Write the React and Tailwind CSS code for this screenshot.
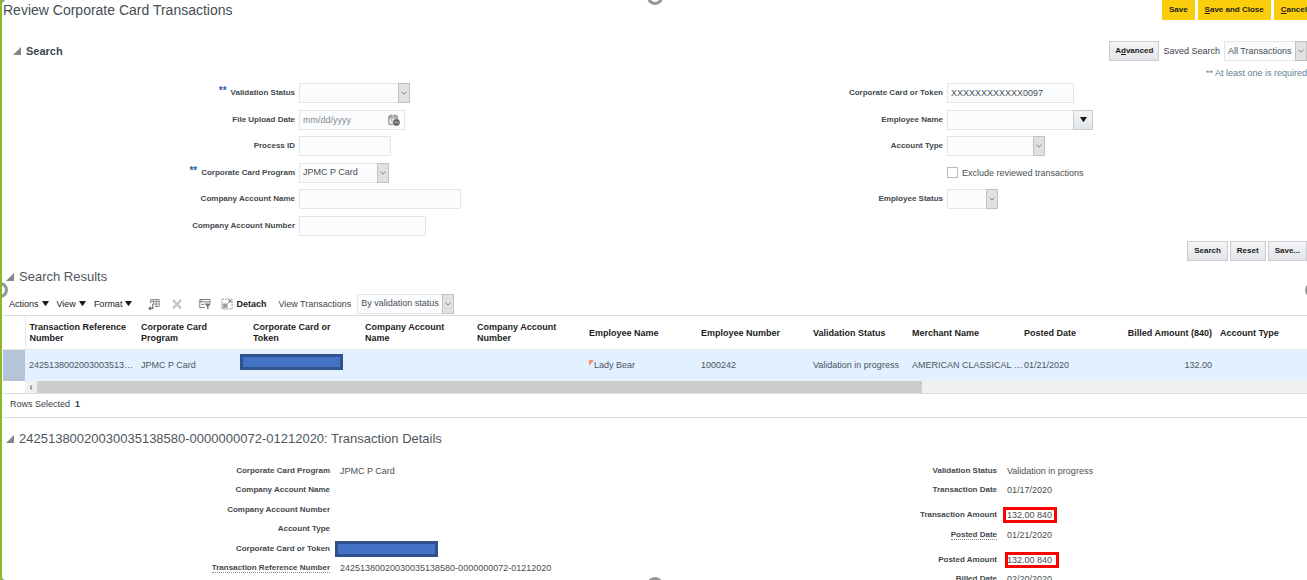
import React from "react";

const fieldBox = "h-5 border border-[#e3e7eb] bg-[#fbfcfe] text-[9px] leading-none text-[#4a4f54]";
const greyButton =
  "h-5 shrink-0 border border-[#c9cdd1] bg-linear-to-b from-[#f3f4f6] to-[#e2e5e8] text-[8px] leading-none font-bold text-[#1c1c1c]";

function Disclosure() {
  return (
    <svg className="size-2 shrink-0" viewBox="0 0 8 8" aria-hidden="true">
      <path d="M8 0V8H0Z" fill="#858585" />
    </svg>
  );
}

function DownTriangle() {
  return (
    <svg className="h-[5px] w-[7px] shrink-0" viewBox="0 0 7 5" aria-hidden="true">
      <path d="M0 0H7L3.9 4.8H3.1Z" fill="#1a1a1a" />
    </svg>
  );
}

function Select({ id, width, options }) {
  return (
    <div className={`grid shrink-0 ${width}`}>
      <select
        id={id}
        className={`col-start-1 row-start-1 w-full min-w-0 appearance-none pr-3 pl-[3px] ${fieldBox}`}
      >
        {options.map((o) => (
          <option key={o}>{o}</option>
        ))}
      </select>
      <span className="pointer-events-none col-start-1 row-start-1 flex h-5 w-3 items-center justify-center justify-self-end border border-[#c2c2c2] bg-[#e1e1e1]">
        <svg className="h-[4px] w-[6px]" viewBox="0 0 6 4" aria-hidden="true">
          <path d="M0.6 0.7L3 3.1L5.4 0.7" fill="none" stroke="#707070" strokeWidth="0.9" />
        </svg>
      </span>
    </div>
  );
}

function FormRow({ id, label, starred, children }) {
  return (
    <div className="flex h-5 items-center gap-1">
      <div className="flex w-[292px] shrink-0 items-center justify-end gap-1 text-[8px] font-bold text-[#43484d]">
        {starred && <span className="pb-1 text-[10px] leading-none text-[#2f62a8]">**</span>}
        {label && <label htmlFor={id}>{label}</label>}
      </div>
      {children}
    </div>
  );
}

function TextField({ id, width, ...rest }) {
  return <input id={id} type="text" className={`shrink-0 px-[3px] ${fieldBox} ${width}`} {...rest} />;
}

function CalendarIcon() {
  return (
    <svg className="size-3" viewBox="0 0 12 12" aria-hidden="true">
      <path d="M5 10.3H0.9V2H9.3V4.6M0.9 4H9.3M3 0.4V2.8M7.2 0.4V2.8" fill="none" stroke="#777" strokeWidth="1" />
      <path d="M2.8 5.8H4V8.4" fill="none" stroke="#888" strokeWidth="0.8" />
      <circle cx="8.4" cy="8.4" r="3.4" fill="#666" />
      <path d="M6.6 7.6L8.4 8.6L10.4 8.2" fill="none" stroke="#ddd" strokeWidth="0.8" />
    </svg>
  );
}

function SearchForm() {
  return (
    <div className="mt-1 grid grid-cols-2 pr-2">
      <div className="flex h-[153px] flex-col justify-between">
        <FormRow id="vstatus" label="Validation Status" starred>
          <Select id="vstatus" width="w-[111px]" options={[""]} />
        </FormRow>
        <FormRow id="upload" label="File Upload Date">
          <div className={`flex w-[106px] items-center pr-1 ${fieldBox}`}>
            <input
              id="upload"
              type="text"
              placeholder="mm/dd/yyyy"
              className="w-full min-w-0 bg-transparent px-[3px] placeholder:text-[#85898d]"
            />
            <button type="button" aria-label="Pick a date">
              <CalendarIcon />
            </button>
          </div>
        </FormRow>
        <FormRow id="process" label="Process ID">
          <TextField id="process" width="w-[92px]" />
        </FormRow>
        <FormRow id="program" label="Corporate Card Program" starred>
          <Select id="program" width="w-[90px]" options={["JPMC P Card"]} />
        </FormRow>
        <FormRow id="accname" label="Company Account Name">
          <TextField id="accname" width="w-[162px]" />
        </FormRow>
        <FormRow id="accnum" label="Company Account Number">
          <TextField id="accnum" width="w-[127px]" />
        </FormRow>
      </div>
      <div className="flex h-[153px] flex-col justify-between">
        <FormRow id="token" label="Corporate Card or Token">
          <TextField id="token" width="w-[127px]" defaultValue="XXXXXXXXXXXX0097" />
        </FormRow>
        <FormRow id="empname" label="Employee Name">
          <div className="flex">
            <TextField id="empname" width="w-[127px]" />
            <button
              type="button"
              aria-label="Choose an employee"
              className={`-ml-px flex w-5 items-center justify-center ${greyButton}`}
            >
              <DownTriangle />
            </button>
          </div>
        </FormRow>
        <FormRow id="acctype" label="Account Type">
          <Select id="acctype" width="w-[98px]" options={[""]} />
        </FormRow>
        <FormRow>
          <label className="flex items-center gap-1 text-[9px] text-[#4a4f54]">
            <input type="checkbox" className="size-[11px] appearance-none border border-[#b5b9bd] bg-white" />
            Exclude reviewed transactions
          </label>
        </FormRow>
        <FormRow id="empstatus" label="Employee Status">
          <Select id="empstatus" width="w-[51px]" options={[""]} />
        </FormRow>
        <div className="h-5" />
      </div>
    </div>
  );
}

function ExportIcon() {
  return (
    <svg className="size-3" viewBox="0 0 12 12" aria-hidden="true">
      <path d="M2.5 5V1.5H11.2V8.5H6.8M2.5 3.6H11.2M5.4 1.5V6M8.3 1.5V8.5M5.2 6H11.2" fill="none" stroke="#858585" strokeWidth="0.9" />
      <path d="M4.8 6V10.4H1.2M2.8 8.6L1 10.4L2.8 12" fill="none" stroke="#666" strokeWidth="1.1" />
    </svg>
  );
}

function DeleteIcon() {
  return (
    <svg className="size-3" viewBox="0 0 12 12" aria-hidden="true">
      <path d="M2 2L10 10.4M10 2L2 10.4" stroke="#c6c6c6" strokeWidth="2.4" />
    </svg>
  );
}

function FilterIcon() {
  return (
    <svg className="size-3" viewBox="0 0 12 12" aria-hidden="true">
      <path d="M11 4.6V1.5H0.8V9.6H5.8M0.8 3.9H11M2.4 6.4H5M2.4 1.5V3.9" fill="none" stroke="#7d7d7d" strokeWidth="1" />
      <path d="M5.4 5.6H12L9.5 8.4V11.6L8 10.6V8.4Z" fill="#777" />
    </svg>
  );
}

function DetachIcon() {
  return (
    <svg className="size-3" viewBox="0 0 12 12" aria-hidden="true">
      <rect x="0.9" y="1.2" width="10.2" height="9.8" fill="none" stroke="#8a8a8a" strokeWidth="0.9" strokeDasharray="2 1" />
      <rect x="1.4" y="5.2" width="5.4" height="5.4" fill="#bdbdbd" />
      <path d="M2.2 7H6M2.2 8.8H6" stroke="#777" strokeWidth="0.8" />
      <path d="M6.8 5.4L9.6 2.8M7.6 2.6H9.8V4.8" fill="none" stroke="#777" strokeWidth="1" />
    </svg>
  );
}

function MenuButton({ children }) {
  return (
    <button type="button" className="flex items-center gap-[3px]">
      {children}
      <DownTriangle />
    </button>
  );
}

function Redacted({ className }) {
  return <span className={`absolute h-4 w-[103px] border-3 border-[#2f528f] bg-[#4472c4] ${className}`} />;
}

const columns = [
  ["Transaction Reference Number", "w-[112px]"],
  ["Corporate Card Program", "w-[112px]"],
  ["Corporate Card or Token", "w-[112px]"],
  ["Company Account Name", "w-[112px]"],
  ["Company Account Number", "w-[112px]"],
  ["Employee Name", "w-[112px]"],
  ["Employee Number", "w-[112px]"],
  ["Validation Status", "w-[99px]"],
  ["Merchant Name", "w-[112px]"],
  ["Posted Date", "w-[84px]"],
  ["Billed Amount (840)", "w-[112px]"],
  ["Account Type", ""],
];

function ResultsTable() {
  return (
    <div className="border-y border-[#dcdcdc]">
      <table className="w-full table-fixed border-collapse text-left text-[9px] leading-[11px]">
        <thead>
          <tr className="h-[33px] border-b border-[#e6e9ec] text-[#1c1c1c]">
            <th className="w-[22px] border-r border-[#e6e9ec]" aria-label="Row" />
            {columns.map(([name, width]) => (
              <th key={name} className={`px-1 pt-[2px] font-bold ${width} ${name.startsWith("Billed") ? "text-right whitespace-nowrap" : ""}`}>
                {name}
              </th>
            ))}
          </tr>
        </thead>
        <tbody>
          <tr className="h-8 bg-[#e2f0ff] whitespace-nowrap text-[#4a5560]">
            <td className="bg-[#b3c5d6]" />
            <td className="pl-1">2425138002003003513…</td>
            <td className="px-1">JPMC P Card</td>
            <td className="relative">
              <Redacted className="top-1 -left-[9px]" />
            </td>
            <td />
            <td />
            <td className="px-1">
              <span className="flex">
                <svg className="h-[6px] w-[5px]" viewBox="0 0 5 6" aria-hidden="true">
                  <path d="M0 0H5L0 6Z" fill="#ee9460" />
                </svg>
                Lady Bear
              </span>
            </td>
            <td className="px-1">1000242</td>
            <td className="pl-1">Validation in progress</td>
            <td className="pl-1">AMERICAN CLASSICAL …</td>
            <td className="px-1">01/21/2020</td>
            <td className="px-1 text-right">132.00</td>
            <td />
          </tr>
        </tbody>
      </table>
      <div className="flex h-3 pl-[22px]">
        <div className="flex flex-1 bg-[#f0f0f0]">
          <button type="button" aria-label="Scroll left" className="flex w-3 items-center justify-center">
            <svg className="h-[5px] w-[4px]" viewBox="0 0 4 5" aria-hidden="true">
              <path d="M3.2 0.4L1 2.5L3.2 4.6" fill="none" stroke="#444" strokeWidth="1" />
            </svg>
          </button>
          <div className="w-[69%] bg-[#cdcdcd]" />
        </div>
      </div>
    </div>
  );
}

function Detail({ label, dotted, labelWidth, children }) {
  return (
    <div className="flex h-[19px] items-center gap-[10px]">
      <dt className={`shrink-0 text-right text-[8px] font-bold text-[#43484d] ${labelWidth}`}>
        <span className={dotted ? "border-b border-dotted border-[#8a8a8a]" : ""}>{label}</span>
      </dt>
      <dd className="relative text-[9px] text-[#4a4f54]">{children}</dd>
    </div>
  );
}

function Highlight({ className }) {
  return <span className={`absolute -top-[2px] h-4 w-[54px] border-3 border-[#fe0000] ${className}`} />;
}

function Handle({ className }) {
  return <span aria-hidden="true" className={`pointer-events-none absolute size-4 rounded-full border-3 border-[#969696] bg-white ${className}`} />;
}

const yellow = "h-5 shrink-0 bg-[#fbcd0a] text-[8px] leading-none font-bold text-[#222]";

export default function App() {
  return (
    <div className="relative h-screen overflow-hidden border-l-2 border-[#8cba26] bg-white pl-px font-['Liberation_Sans',Arial,sans-serif] text-[9px] leading-3 text-[#3c4146]">
      <header className="flex items-center justify-between">
        <h1 className="text-[14px] leading-5 text-[#464d54]">Review Corporate Card Transactions</h1>
        <div className="flex gap-[3px]">
          <button type="button" className={`px-[7px] ${yellow}`}>Save</button>
          <button type="button" className={`px-[7px] ${yellow}`}><u>S</u>ave and Close</button>
          <button type="button" className={`pl-[7px] ${yellow}`}><u>C</u>ancel</button>
        </div>
      </header>

      <section>
        <div className="mt-[21px] flex h-5 items-center justify-between">
          <h2 className="flex items-center gap-[5px] pl-[10px] text-[11px] font-bold text-[#3f464d]">
            <Disclosure />
            Search
          </h2>
          <div className="flex items-center gap-1">
            <button type="button" className={`px-[5px] ${greyButton}`}>A<u>d</u>vanced</button>
            <label htmlFor="saved">Saved Search</label>
            <Select id="saved" width="w-[83px]" options={["All Transactions"]} />
          </div>
        </div>
        <p className="mt-[6px] text-right text-[#5f7f92]">** At least one is required</p>
        <SearchForm />
        <div className="mt-[5px] flex justify-end gap-[2px]">
          <button type="button" className={`px-[6px] ${greyButton}`}>Search</button>
          <button type="button" className={`px-[6px] ${greyButton}`}>Reset</button>
          <button type="button" className={`px-[6px] ${greyButton}`}>Save...</button>
        </div>
      </section>

      <section>
        <h2 className="mt-[6px] flex h-5 items-center gap-[5px] pl-[3px] text-[13px] text-[#4f565d]">
          <Disclosure />
          Search Results
        </h2>
        <div className="mt-[5px] flex h-[23px] items-center pl-[6px] text-[#222]">
          <div className="flex gap-2">
            <MenuButton>Actions</MenuButton>
            <MenuButton>View</MenuButton>
            <MenuButton>Format</MenuButton>
          </div>
          <button type="button" aria-label="Export" className="ml-4"><ExportIcon /></button>
          <button type="button" aria-label="Delete" className="ml-[11px]"><DeleteIcon /></button>
          <button type="button" aria-label="Query by example" className="ml-4"><FilterIcon /></button>
          <button type="button" className="ml-[10px] flex items-center gap-[3px] font-bold"><DetachIcon />Detach</button>
          <label htmlFor="viewby" className="mr-[6px] ml-3 text-[#444]">View Transactions</label>
          <Select id="viewby" width="w-[97px]" options={["By validation status"]} />
        </div>
        <ResultsTable />
        <p className="mt-1 pl-[7px]">Rows Selected&nbsp; <span className="font-bold">1</span></p>
      </section>

      <section className="mt-[7px] border-t border-[#dedede]">
        <h2 className="mt-[11px] flex h-5 items-center gap-[5px] pl-[3px] text-[13px] text-[#4f565d]">
          <Disclosure />
          24251380020030035138580-0000000072-01212020: Transaction Details
        </h2>
        <div className="mt-3 grid grid-cols-2">
          <dl className="flex h-[117px] flex-col justify-between">
            <Detail labelWidth="w-[327px]" label="Corporate Card Program">JPMC P Card</Detail>
            <Detail labelWidth="w-[327px]" label="Company Account Name" />
            <Detail labelWidth="w-[327px]" label="Company Account Number" />
            <Detail labelWidth="w-[327px]" label="Account Type" />
            <Detail labelWidth="w-[327px]" label="Corporate Card or Token">
              <Redacted className="-top-2 -left-[5px]" />
            </Detail>
            <Detail labelWidth="w-[327px]" label="Transaction Reference Number" dotted>
              24251380020030035138580-0000000072-01212020
            </Detail>
          </dl>
          <dl className="flex h-[128px] flex-col justify-between">
            <Detail labelWidth="w-[342px]" label="Validation Status">Validation in progress</Detail>
            <Detail labelWidth="w-[342px]" label="Transaction Date">01/17/2020</Detail>
            <div className="mt-[5px]">
              <Detail labelWidth="w-[342px]" label="Transaction Amount">
                132.00 840
                <Highlight className="-left-1" />
              </Detail>
            </div>
            <Detail labelWidth="w-[342px]" label="Posted Date" dotted>01/21/2020</Detail>
            <div className="mt-[5px]">
              <Detail labelWidth="w-[342px]" label="Posted Amount">
                132.00 840
                <Highlight className="-left-[2px]" />
              </Detail>
            </div>
            <Detail labelWidth="w-[342px]" label="Billed Date">02/20/2020</Detail>
          </dl>
        </div>
      </section>

      <Handle className="-top-3 -left-3" />
      <Handle className="-top-[11px] left-1/2 -translate-x-1/2" />
      <Handle className="top-1/2 -left-[10px] -translate-y-1/2" />
      <Handle className="top-1/2 -right-[14px] -translate-y-1/2" />
      <Handle className="-bottom-[13px] -left-3" />
      <Handle className="-bottom-[13px] left-1/2 -translate-x-1/2" />
    </div>
  );
}
